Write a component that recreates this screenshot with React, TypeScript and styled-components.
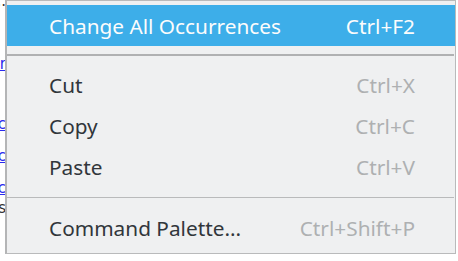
import React from "react";
import styled, { createGlobalStyle } from "styled-components";

const Global = createGlobalStyle`
  html, body {
    margin: 0;
    padding: 0;
    background: #ffffff;
    width: 458px;
    height: 261px;
    overflow: hidden;
  }
`;

const Page = styled.div`
  position: relative;
  width: 458px;
  height: 261px;
  overflow: hidden;
  font-family: "DejaVu Sans", sans-serif;
  font-size: 15px;
`;

const PageText = styled.div`
  display: flex;
  flex-direction: column;
  align-items: flex-end;
  width: 6px;
  overflow: hidden;
`;

const Line = styled.span<{ $h: number }>`
  display: block;
  height: ${(p) => p.$h}px;
  line-height: ${(p) => p.$h}px;
  white-space: nowrap;
  color: #333;
`;

const Link = styled(Line)`
  color: #2a2aee;
  text-decoration: underline;
`;

const Menu = styled.div`
  position: absolute;
  left: 5px;
  top: 0;
  width: 451px;
  height: 254px;
  box-sizing: border-box;
  background: #eff0f1;
  border: 1px solid #b9babb;
  border-left: 2px solid #b4b5b6;
  padding: 4px 0;
  display: flex;
  flex-direction: column;
  font-family: "Noto Sans", "Open Sans", sans-serif;
  font-size: 20.8px;
`;

const Item = styled.div<{ $active?: boolean }>`
  display: flex;
  align-items: center;
  justify-content: space-between;
  height: 41px;
  padding: 0 40px 0 42px;
  background: ${(p) => (p.$active ? "#3daee9" : "transparent")};
  color: ${(p) => (p.$active ? "#fcfcfc" : "#31363b")};
`;

const Shortcut = styled.span<{ $active?: boolean }>`
  color: ${(p) => (p.$active ? "#fcfcfc" : "#aeb0b2")};
`;

const Separator = styled.div<{ $thick?: boolean }>`
  height: ${(p) => (p.$thick ? 18 : 20)}px;
  display: flex;
  align-items: center;
  padding-right: 1px;

  &::after {
    content: "";
    flex: 1;
    height: ${(p) => (p.$thick ? 2 : 1)}px;
    background: ${(p) => (p.$thick ? "#b0b1b2" : "#b9babb")};
  }
`;

const items = [
  { label: "Cut", key: "Ctrl+X" },
  { label: "Copy", key: "Ctrl+C" },
  { label: "Paste", key: "Ctrl+V" },
];

export default function App() {
  return (
    <Page>
      <Global />
      <PageText>
        <Line $h={12}>··</Line>
        <Line $h={42}> </Line>
        <Link $h={20}>r</Link>
        <Line $h={40}> </Line>
        <Link $h={20}>c</Link>
        <Line $h={12}> </Line>
        <Link $h={20}>c</Link>
        <Line $h={12}> </Line>
        <Link $h={20}>c</Link>
        <Line $h={20}>s</Line>
      </PageText>
      <Menu>
        <Item $active>
          <span>Change All Occurrences</span>
          <Shortcut $active>Ctrl+F2</Shortcut>
        </Item>
        <Separator $thick />
        {items.map((it) => (
          <Item key={it.label}>
            <span>{it.label}</span>
            <Shortcut>{it.key}</Shortcut>
          </Item>
        ))}
        <Separator />
        <Item>
          <span>Command Palette...</span>
          <Shortcut>Ctrl+Shift+P</Shortcut>
        </Item>
      </Menu>
    </Page>
  );
}
